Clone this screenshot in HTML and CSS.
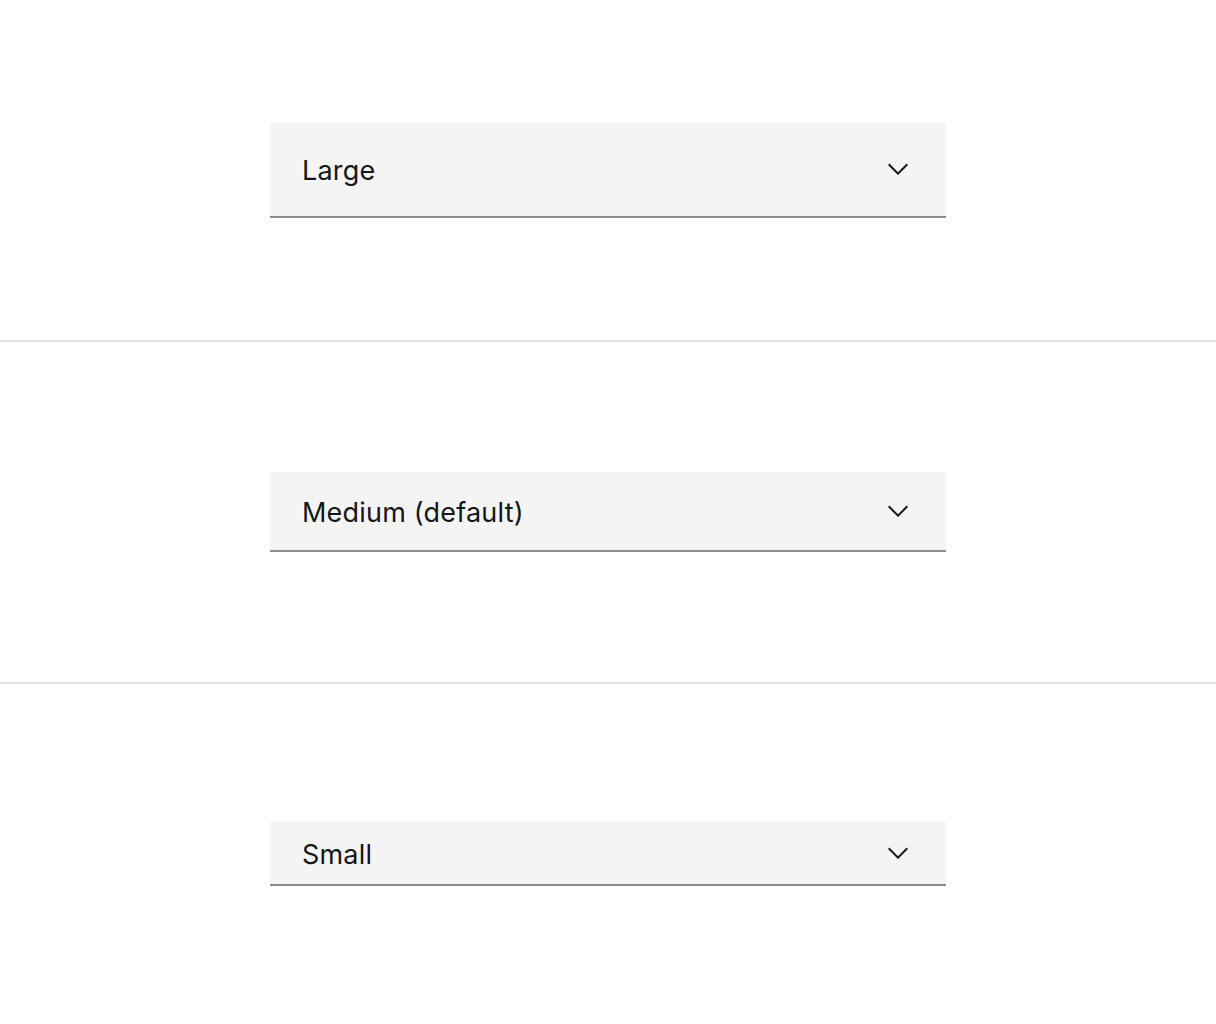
FILE: index.html
```html
<!DOCTYPE html>
<html lang="en">
<head>
    <meta charset="UTF-8">
    <meta name="viewport" content="width=device-width, initial-scale=1.0">
    <title>Dropdown sizes</title>
    <link rel="stylesheet" href="styles.css">
</head>
<body>
    <div class="section">
        <button class="dropdown dropdown--lg">
            <span class="dropdown__label">Large</span>
            <svg class="dropdown__icon" viewBox="0 0 16 16" width="32" height="32"><path d="M8 11L3 6 3.7 5.3 8 9.6 12.3 5.3 13 6z"/></svg>
        </button>
    </div>

    <div class="section">
        <button class="dropdown dropdown--md">
            <span class="dropdown__label">Medium (default)</span>
            <svg class="dropdown__icon" viewBox="0 0 16 16" width="32" height="32"><path d="M8 11L3 6 3.7 5.3 8 9.6 12.3 5.3 13 6z"/></svg>
        </button>
    </div>

    <div class="section">
        <button class="dropdown dropdown--sm">
            <span class="dropdown__label">Small</span>
            <svg class="dropdown__icon" viewBox="0 0 16 16" width="32" height="32"><path d="M8 11L3 6 3.7 5.3 8 9.6 12.3 5.3 13 6z"/></svg>
        </button>
    </div>
</body>
</html>
```

FILE: styles.css
```css
body {
    margin: 0;
    padding: 0;
    background: #ffffff;
    font-family: 'Inter', 'Noto Sans', sans-serif;
    color: #161616;
}
.section {
    height: 340px;
    display: flex;
    align-items: center;
    justify-content: flex-start;
    padding-left: 270px;
    border-bottom: 2px solid #e0e0e0;
}
.section:last-child {
    border-bottom: none;
}
.dropdown {
    width: 676px;
    display: flex;
    align-items: center;
    justify-content: space-between;
    background: #f4f4f4;
    border: none;
    border-bottom: 2px solid #8d8d8d;
    padding: 0 32px;
    margin: 0;
    box-sizing: border-box;
    font-family: inherit;
    color: #161616;
    cursor: pointer;
    text-align: left;
}
.dropdown--lg {
    height: 96px;
}
.dropdown--md {
    height: 80px;
}
.dropdown--sm {
    height: 64px;
}
.dropdown__label {
    font-size: 27px;
    letter-spacing: 0.2px;
    line-height: 36px;
    padding-top: 4px;
}
.dropdown__icon {
    fill: #161616;
    flex-shrink: 0;
}
```
